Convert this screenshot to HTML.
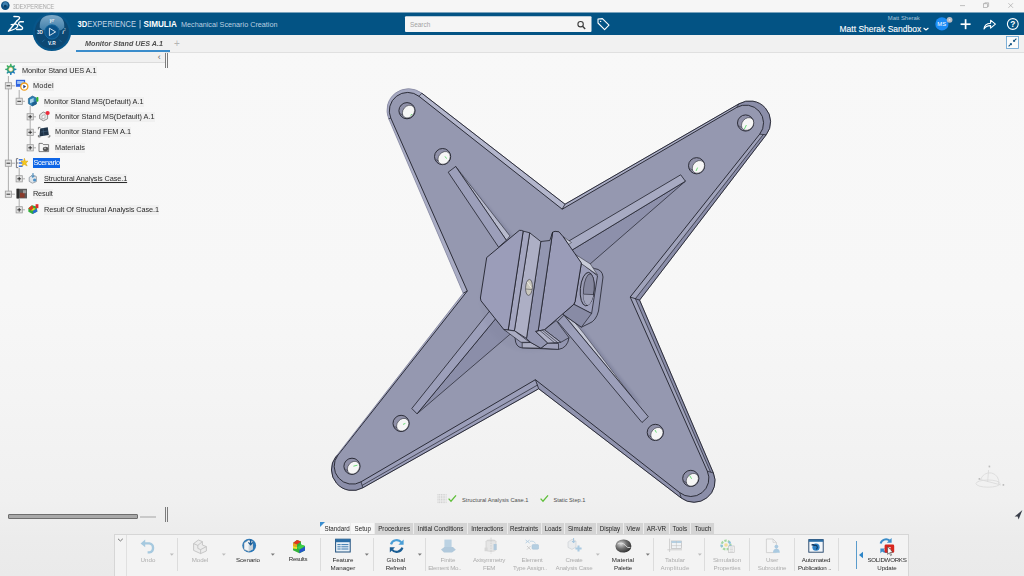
<!DOCTYPE html>
<html>
<head>
<meta charset="utf-8">
<title>3DEXPERIENCE</title>
<style>
html,body{margin:0;padding:0;}
body{width:1024px;height:576px;overflow:hidden;position:relative;font-family:"Liberation Sans",sans-serif;background:#f4f4f4;}
.abs{position:absolute;}
.tree,.tl,.tab,#tabtxt,#titlebar .t{will-change:transform;}
#viewport{position:absolute;left:0;top:36px;width:1024px;height:540px;background:linear-gradient(to bottom,#f8f8f8 0%,#f7f7f7 49%,#f4f4f4 67%,#f0f0f0 86%,#ececec 93%,#eaeaea 100%);}
#titlebar{position:absolute;left:0;top:0;width:1024px;height:12px;background:#f6f6f6;}
#titlebar .t{position:absolute;left:12.8px;top:2.9px;font-size:6.7px;color:#a4a4a4;transform:scaleX(0.795);transform-origin:0 0;}
#topbar{position:absolute;left:0;top:12px;width:1024px;height:24px;}
#tabbar{position:absolute;left:0;top:35px;width:1024px;height:17px;background:#f1f1f1;border-bottom:1px solid #e0e0e0;}
.tree{position:absolute;font-size:7.35px;color:#2b2b2b;white-space:nowrap;letter-spacing:0px;}
.tabs{position:absolute;top:522.6px;height:11.4px;font-size:6.7px;color:#1f1f1f;}
.tbt{display:inline-block;transform:scaleX(0.93);}
.tab{position:absolute;top:0;height:11.4px;line-height:12.6px;text-align:center;background:#d4d4d4;border-right:1px solid #ececec;box-sizing:border-box;}
.tab.on{background:#f7f7f7;}
.tl{position:absolute;font-size:6.2px;line-height:7.9px;text-align:center;white-space:nowrap;color:#2a2a2a;transform:translateX(-50%);}
.tl.dis{color:#adadad;}
</style>
</head>
<body>
<div id="viewport"></div>
<svg class="abs" style="left:0;top:0" width="1024" height="576" viewBox="0 0 1024 576">
<defs><filter id="bl" x="-20%" y="-20%" width="140%" height="140%"><feGaussianBlur stdDeviation="1.2"/></filter></defs>
<path d="M463.2 293.2 L388.7 118.8 A21.6 21.6 0 0 1 421.8 93.2 L565.0 204.2 L739.0 103.8 A21.0 21.0 0 0 1 766.2 134.8 L639.6 300.1 L713.4 473.0 A21.1 21.1 0 0 1 681.2 498.0 L538.7 388.8 L362.8 487.8 A21.0 21.0 0 0 1 335.9 456.6 L463.2 293.2 Z" fill="#8b8ea9"/>
<polygon points="421.8,93.2 565.0,204.2 562.2,209.2 419.0,96.3" fill="#b3b6cc" />
<polygon points="565.0,204.2 739.0,103.8 736.5,107.5 562.2,209.2" fill="#a9acc4" />
<path d="M388.7 118.8 A21.6 21.6 0 0 1 421.8 93.2 L419.0 96.3 A18.4 18.4 0 0 0 390.8 118.1 Z" fill="#a6a9c2"/>
<polygon points="535.4,379.7 361.1,481.8 362.8,487.8 538.7,388.8" fill="#9b9eb9" />
<polygon points="679.7,492.6 535.4,379.7 538.7,388.8 681.2,498.0" fill="#9093ae" />
<polygon points="463.2,293.2 388.7,118.8 390.8,118.1 467.3,291.0" fill="#a9acc4" />
<polygon points="335.9,456.6 463.2,293.2 467.3,291.0 337.9,455.2" fill="#a9acc4" />
<polygon points="759.7,134.2 763.3,134.5 635.4,298.7 710.6,472.2 707.3,471.1 630.2,297.0" fill="#a0a3bb" />
<path d="M467.3 291.0 L390.8 118.1 A18.4 18.4 0 0 1 419.0 96.3 L562.2 209.2 L736.5 107.5 A18.0 18.0 0 0 1 759.7 134.2 L630.2 297.0 L707.3 471.1 A18.0 18.0 0 0 1 679.7 492.6 L535.4 379.7 L361.1 481.8 A18.0 18.0 0 0 1 337.9 455.2 L467.3 291.0 Z" fill="#9598b0" stroke="#20212b" stroke-width="0.9" stroke-linejoin="round"/>
<path d="M463.2 293.2 L388.7 118.8 A21.6 21.6 0 0 1 421.8 93.2 L565.0 204.2 L739.0 103.8 A21.0 21.0 0 0 1 766.2 134.8 L639.6 300.1 L713.4 473.0 A21.1 21.1 0 0 1 681.2 498.0 L538.7 388.8 L362.8 487.8 A21.0 21.0 0 0 1 335.9 456.6 L463.2 293.2 Z" fill="none" stroke="#7d8099" stroke-width="0.6" stroke-linejoin="round"/>
<path d="M421.8 93.2 L565 204.2 L739.0 103.8 A21 21 0 0 1 766.2 134.8 L639.6 300.1 L713.4 473.0 A21.1 21.1 0 0 1 681.2 498.0 L538.7 388.75 L362.8 487.8 A21 21 0 0 1 335.9 456.6" fill="none" stroke="#20212b" stroke-width="0.9" stroke-linejoin="round"/>
<line x1="562.2" y1="209.2" x2="565" y2="204.2" stroke="#20212b" stroke-width="0.8"/>
<line x1="630.2" y1="297" x2="639.6" y2="300.1" stroke="#20212b" stroke-width="0.8"/>
<line x1="535.4" y1="379.7" x2="538.7" y2="388.75" stroke="#20212b" stroke-width="0.8"/>
<line x1="467.3" y1="291" x2="463.2" y2="293.2" stroke="#20212b" stroke-width="0.8"/>
<line x1="390.8" y1="118.1" x2="388.7" y2="118.8" stroke="#20212b" stroke-width="0.7"/>
<line x1="419.0" y1="96.3" x2="421.8" y2="93.2" stroke="#20212b" stroke-width="0.7"/>
<line x1="736.5" y1="107.5" x2="739.0" y2="103.8" stroke="#20212b" stroke-width="0.7"/>
<line x1="759.7" y1="134.2" x2="766.2" y2="134.8" stroke="#20212b" stroke-width="0.7"/>
<line x1="707.3" y1="471.1" x2="713.4" y2="473.0" stroke="#20212b" stroke-width="0.7"/>
<line x1="679.7" y1="492.6" x2="681.2" y2="498.0" stroke="#20212b" stroke-width="0.7"/>
<line x1="361.1" y1="481.8" x2="362.8" y2="487.8" stroke="#20212b" stroke-width="0.7"/>
<line x1="337.9" y1="455.2" x2="335.9" y2="456.6" stroke="#20212b" stroke-width="0.7"/>
<polyline points="763.3,134.5 635.4,298.7 710.6,472.2" fill="none" stroke="#20212b" stroke-width="0.7"/>
<polyline points="362.1,485.4 537.4,385.1" fill="none" stroke="#20212b" stroke-width="0.7"/>
<circle cx="407" cy="110.7" r="8.1" fill="#8f90a8" stroke="#20212b" stroke-width="0.9"/>
<ellipse cx="408.5" cy="111.6" rx="6.9" ry="5.5" fill="#f6f6f6" stroke="#20212b" stroke-width="0.5" transform="rotate(-50 408.5 111.6)"/>
<line x1="399.8" y1="113.3" x2="403" y2="115.3" stroke="#20212b" stroke-width="0.5"/>
<circle cx="745.6" cy="123" r="8.1" fill="#8f90a8" stroke="#20212b" stroke-width="0.9"/>
<ellipse cx="747.6" cy="124" rx="6.9" ry="5.5" fill="#f6f6f6" stroke="#20212b" stroke-width="0.5" transform="rotate(-50 747.6 124)"/>
<line x1="738.4" y1="125.6" x2="741.6" y2="127.6" stroke="#20212b" stroke-width="0.5"/>
<circle cx="352" cy="466.3" r="8.1" fill="#8f90a8" stroke="#20212b" stroke-width="0.9"/>
<ellipse cx="353.5" cy="467.7" rx="6.9" ry="5.5" fill="#f6f6f6" stroke="#20212b" stroke-width="0.5" transform="rotate(-50 353.5 467.7)"/>
<line x1="344.8" y1="468.90000000000003" x2="348" y2="470.90000000000003" stroke="#20212b" stroke-width="0.5"/>
<circle cx="690.8" cy="478.4" r="8.1" fill="#8f90a8" stroke="#20212b" stroke-width="0.9"/>
<ellipse cx="692.3" cy="479.8" rx="6.9" ry="5.5" fill="#f6f6f6" stroke="#20212b" stroke-width="0.5" transform="rotate(-50 692.3 479.8)"/>
<line x1="683.5999999999999" y1="481.0" x2="686.8" y2="483.0" stroke="#20212b" stroke-width="0.5"/>
<circle cx="442.6" cy="156.6" r="8.1" fill="#8f90a8" stroke="#20212b" stroke-width="0.9"/>
<ellipse cx="444.1" cy="157.9" rx="6.9" ry="5.5" fill="#f6f6f6" stroke="#20212b" stroke-width="0.5" transform="rotate(-50 444.1 157.9)"/>
<line x1="435.40000000000003" y1="159.2" x2="438.6" y2="161.2" stroke="#20212b" stroke-width="0.5"/>
<circle cx="696.6" cy="165.75" r="8.1" fill="#8f90a8" stroke="#20212b" stroke-width="0.9"/>
<ellipse cx="698.4" cy="166.9" rx="6.9" ry="5.5" fill="#f6f6f6" stroke="#20212b" stroke-width="0.5" transform="rotate(-50 698.4 166.9)"/>
<line x1="689.4" y1="168.35" x2="692.6" y2="170.35" stroke="#20212b" stroke-width="0.5"/>
<circle cx="401.1" cy="423.4" r="8.1" fill="#8f90a8" stroke="#20212b" stroke-width="0.9"/>
<ellipse cx="402.7" cy="424.75" rx="6.9" ry="5.5" fill="#f6f6f6" stroke="#20212b" stroke-width="0.5" transform="rotate(-50 402.7 424.75)"/>
<line x1="393.90000000000003" y1="426.0" x2="397.1" y2="428.0" stroke="#20212b" stroke-width="0.5"/>
<circle cx="655.3" cy="432.4" r="8.1" fill="#8f90a8" stroke="#20212b" stroke-width="0.9"/>
<ellipse cx="656.9" cy="433.8" rx="6.9" ry="5.5" fill="#f6f6f6" stroke="#20212b" stroke-width="0.5" transform="rotate(-50 656.9 433.8)"/>
<line x1="648.0999999999999" y1="435.0" x2="651.3" y2="437.0" stroke="#20212b" stroke-width="0.5"/>
<line x1="410.4" y1="115.4" x2="412" y2="114.2" stroke="#46d455" stroke-width="0.8"/>
<line x1="445" y1="156.4" x2="446.6" y2="158.6" stroke="#46d455" stroke-width="0.8"/>
<line x1="744.4" y1="129" x2="746.4" y2="125" stroke="#46d455" stroke-width="0.8"/>
<line x1="696" y1="171" x2="697.6" y2="167.6" stroke="#46d455" stroke-width="0.8"/>
<line x1="353.4" y1="466.2" x2="357.4" y2="465.2" stroke="#46d455" stroke-width="0.8"/>
<line x1="403" y1="424.4" x2="405.4" y2="423.4" stroke="#46d455" stroke-width="0.8"/>
<line x1="689.6" y1="475.4" x2="691.6" y2="478.8" stroke="#46d455" stroke-width="0.8"/>
<line x1="655" y1="430" x2="656.4" y2="432.6" stroke="#46d455" stroke-width="0.8"/>
<polygon points="455.7,166.5 509.9,235.9 506.4,240.3" fill="#b7bacd" />
<polygon points="455.7,166.5 512,234 520,246 500,244" fill="#6f7390" opacity="0.35" filter="url(#bl)"/>
<polygon points="455.7,166.5 509.9,235.9 506.4,240.3" fill="#b7bacd" stroke="#20212b" stroke-width="0.6" stroke-linejoin="round" />
<polygon points="448.2,172.2 455.7,166.5 506.4,240.3 498.6,247.2" fill="#9c9fba" stroke="#20212b" stroke-width="0.8" stroke-linejoin="round" />
<polygon points="685.4,181.2 561.8,256.3 576.5,275.8" fill="#8d90ab" stroke="#20212b" stroke-width="0.7" stroke-linejoin="round" />
<polygon points="680.7,174.8 685.4,181.2 561.8,256.3 556.5,248.3" fill="#a7aac2" stroke="#20212b" stroke-width="0.8" stroke-linejoin="round" />
<polygon points="417.0,413.8 500.5,312.8 517.6,327.8" fill="#8b8ea9" stroke="#20212b" stroke-width="0.7" stroke-linejoin="round" />
<polygon points="411.8,408.5 417.0,413.8 500.5,312.8 491.2,309.0" fill="#9c9fba" stroke="#20212b" stroke-width="0.8" stroke-linejoin="round" />
<polygon points="570,318 584,330 640,402 636,408 590,352" fill="#6f7390" opacity="0.4" filter="url(#bl)"/>
<polygon points="565.0,316.0 572.0,319.0 583.8,333.5 634.0,399.6" fill="#c6c9d7" stroke="#20212b" stroke-width="0.5" stroke-linejoin="round" />
<polygon points="642.0,422.5 648.3,416.7 564.0,315.2 557.7,321.5" fill="#9c9fba" stroke="#20212b" stroke-width="0.8" stroke-linejoin="round" />
<ellipse cx="530" cy="300" rx="50" ry="52" fill="#787b96" opacity="0.12" filter="url(#bl)"/>
<path d="M515.1 334 L515.1 338.4 Q515.5 347 521.8 347.8 L558.5 349.4 Q567.5 348 569 337.7 L560 332 L540 330 Z" fill="#9396b1" stroke="#20212b" stroke-width="0.8"/>
<polygon points="522.2,342.7 531.0,342.5 540.9,348.2 522.2,347.8" fill="#acaec3" stroke="#20212b" stroke-width="0.7" stroke-linejoin="round" />
<polygon points="547.6,343.1 558.5,343.5 558.5,349.4 540.9,348.2" fill="#9fa1ba" stroke="#20212b" stroke-width="0.7" stroke-linejoin="round" />
<polygon points="544.4,329.8 556.2,320.5 569.0,337.7 560.8,342.3" fill="#8e91ab" stroke="#20212b" stroke-width="0.7" stroke-linejoin="round" />
<path d="M581.4 263 L594.6 268.6 Q602.5 269.5 603 277 L598.5 311 Q596 321 589 323.5 L581.4 327.2 L562.6 314 Z" fill="#9497b1" stroke="#20212b" stroke-width="0.8" stroke-linejoin="round"/>
<polygon points="581.4,263.0 597.5,275.8 591.6,313.5 573.8,304.3 575.1,301.5" fill="#9ea0bb" stroke="#20212b" stroke-width="0.8" stroke-linejoin="round" />
<polygon points="573.8,304.3 591.6,313.5 581.4,327.2 562.6,314.0" fill="#888ba5" stroke="#20212b" stroke-width="0.7" stroke-linejoin="round" />
<ellipse cx="587.2" cy="289.1" rx="6.9" ry="16.8" fill="#9a9cb4" stroke="#20212b" stroke-width="0.9" transform="rotate(5 587.2 289.1)"/>
<clipPath id="hc"><rect x="570" y="294.4" width="40" height="30"/></clipPath>
<ellipse cx="588.8" cy="289.4" rx="5.3" ry="15.6" fill="#85879e" stroke="#20212b" stroke-width="0.6" transform="rotate(5 588.8 289.4)"/>
<ellipse cx="588.8" cy="289.4" rx="5.3" ry="15.6" fill="#a3a5bb" clip-path="url(#hc)" transform="rotate(5 588.8 289.4)"/>
<line x1="583.6" y1="294.2" x2="593.6" y2="294.6" stroke="#20212b" stroke-width="0.6"/>
<polygon points="563.0,236.5 571.5,242.5 568.5,244.5" fill="#c9ccd9" stroke="#20212b" stroke-width="0.5" stroke-linejoin="round" />
<polygon points="575.5,254.5 590.4,264.0 597.6,275.0 581.2,263.6" fill="#c9ccd9" stroke="#20212b" stroke-width="0.5" stroke-linejoin="round" />
<polygon points="552.6,232.2 555.0,231.3 559.0,231.8 563.0,236.5 581.4,263.0 575.1,301.5 573.8,304.3 544.4,329.8 535.5,331.4 538.2,330.6" fill="#9a9cb8" stroke="#20212b" stroke-width="0.9" stroke-linejoin="round" />
<polygon points="535.5,331.4 544.4,329.8 560.8,342.3 547.6,343.1" fill="#afb1c6" stroke="#20212b" stroke-width="0.7" stroke-linejoin="round" />
<line x1="540" y1="330.6" x2="554.5" y2="342.7" stroke="#20212b" stroke-width="0.6"/>
<line x1="542.3" y1="330.2" x2="557.6" y2="342.5" stroke="#20212b" stroke-width="0.6"/>
<polygon points="540.8,241.5 549.8,240.5 552.6,232.2 538.2,330.6 535.5,331.4 547.6,343.1 540.9,348.2 530.4,342.3 526.5,338.4" fill="#9396b1" stroke="#20212b" stroke-width="0.8" stroke-linejoin="round" />
<polygon points="529.7,232.8 540.8,241.5 526.5,338.4 514.4,330.7" fill="#adafc5" stroke="#20212b" stroke-width="0.8" stroke-linejoin="round" />
<polygon points="523.2,231.1 529.7,232.8 514.4,330.7 508.2,330.0" fill="#a3a5bf" stroke="#20212b" stroke-width="0.8" stroke-linejoin="round" />
<path d="M519.3 230.4 L486.7 257.5 L480.4 298 L481 300.8 L503.8 329.5 L508.2 330 L523.2 231.1 Q521.5 230 519.3 230.4 Z" fill="#9b9db9" stroke="#20212b" stroke-width="0.9" stroke-linejoin="round"/>
<polygon points="503.8,329.5 514.8,331.0 527.2,340.4 530.4,342.3 521.0,342.3" fill="#aaacc2" stroke="#20212b" stroke-width="0.7" stroke-linejoin="round" />
<ellipse cx="529" cy="287.4" rx="3.4" ry="8" fill="#c9c7bd" stroke="#4a4a50" stroke-width="0.7" transform="rotate(4 529 287.4)"/>
<line x1="526" y1="289" x2="532" y2="289.6" stroke="#55555a" stroke-width="0.6"/>
<line x1="527.3" y1="282" x2="531.2" y2="287.5" stroke="#f2f0e6" stroke-width="0.9"/>
</svg>
<div id="titlebar">
<svg class="abs" style="left:0;top:0" width="14" height="12" viewBox="0 0 14 12"><circle cx="5.3" cy="5.6" r="4.3" fill="#0d4f80"/><circle cx="5.3" cy="4.6" r="2.6" fill="#3d7fae"/><circle cx="5.3" cy="6.2" r="1.4" fill="#0a3c63"/></svg>
<span class="t">3DEXPERIENCE</span>
<svg class="abs" style="left:950px;top:0" width="74" height="12" viewBox="950 0 74 12"><g stroke="#9a9a9a" stroke-width="0.6" fill="none"><line x1="960" y1="5.6" x2="965" y2="5.6"/><rect x="983.6" y="3.8" width="3.8" height="3.6"/><path d="M984.8 3.8V2.8H988.6V6.4H987.4"/><line x1="1008.4" y1="3.2" x2="1013" y2="7.8"/><line x1="1013" y1="3.2" x2="1008.4" y2="7.8"/></g></svg>
</div>
<div id="topbar">
<svg class="abs" style="left:0;top:0" width="1024" height="24" viewBox="0 12 1024 24">
<rect x="0" y="12.5" width="1024" height="22.5" fill="#035384"/>
<!-- DS logo -->
<g fill="none" stroke="#fff" stroke-width="1.35" stroke-linecap="round" stroke-linejoin="round">
<path d="M13.9 16.5 L18.4 16.6 Q20.2 17 19.3 18.8 L16.8 21"/>
<path d="M16.8 21 L8.4 31.2 Q17 29 17.6 26.4 Q17.8 24 15.6 24.1 L11.2 24.6"/>
<path d="M23.4 21.7 L20.4 21.7 Q18 22.4 18.9 24.6 L22.4 27.2 Q23.2 29.2 20.8 29.5 L16.6 29.5"/>
</g>
<!-- search -->
<rect x="405" y="16.3" width="186.5" height="15.8" rx="1" fill="#f5f5f5"/>
<text x="410" y="26.6" font-size="6.4" fill="#a3a3a3" font-family="Liberation Sans">Search</text>
<g stroke="#3c3c3c" fill="none" stroke-width="1.1"><circle cx="580.6" cy="24.2" r="2.7"/><line x1="582.6" y1="26.3" x2="585.2" y2="28.9" stroke-width="1.4"/></g>
<!-- tag -->
<g stroke="#fff" fill="none" stroke-width="1.1" stroke-linejoin="round"><path d="M598 19 L602.4 18.6 L609 25.2 L604.6 29.6 L598 23 Z"/><circle cx="600.6" cy="21.4" r="0.7" fill="#fff" stroke="none"/></g>
<!-- brand text -->
<text x="77.5" y="27" font-size="8.3" fill="#fff" font-family="Liberation Sans" textLength="58.5" lengthAdjust="spacingAndGlyphs"><tspan font-weight="bold">3D</tspan><tspan fill="#c3d6e6">EXPERIENCE</tspan></text>
<rect x="139.6" y="20" width="0.9" height="8.5" fill="#c3d6e6"/>
<text x="143.5" y="27" font-size="8.3" fill="#fff" font-weight="bold" font-family="Liberation Sans" textLength="33.5" lengthAdjust="spacingAndGlyphs">SIMULIA</text>
<text x="181" y="27" font-size="7.4" fill="#bcd0e1" font-family="Liberation Sans" textLength="96.5" lengthAdjust="spacingAndGlyphs">Mechanical Scenario Creation</text>
<!-- user -->
<text x="887.7" y="20.4" font-size="5.4" fill="#a9c3d9" font-family="Liberation Sans" textLength="32" lengthAdjust="spacingAndGlyphs">Matt Sherak</text>
<text x="839.5" y="31.8" font-size="8.6" fill="#fff" font-family="Liberation Sans" textLength="81.7" lengthAdjust="spacingAndGlyphs" stroke="#fff" stroke-width="0.1">Matt Sherak Sandbox</text>
<path d="M923.6 28 L926 30 L928.4 28" stroke="#fff" stroke-width="1.1" fill="none"/>
<circle cx="941.9" cy="23.9" r="6.6" fill="#1b8cf5"/>
<text x="941.7" y="26.2" font-size="5.8" fill="#fff" text-anchor="middle" font-family="Liberation Sans">MS</text>
<circle cx="949.6" cy="19.8" r="2.9" fill="#b9bcc2"/><circle cx="949.6" cy="19.8" r="0.9" fill="#e8e8e8"/>
<g stroke="#fff" stroke-width="1.7" stroke-linecap="butt"><line x1="960.6" y1="24.2" x2="970.6" y2="24.2"/><line x1="965.6" y1="19.2" x2="965.6" y2="29.2"/></g>
<path d="M984 29 Q984.4 23.6 990.6 23.2 L990.6 20.2 L995.4 24.2 L990.6 28.2 L990.6 25.6 Q986.2 25.4 984 29 Z" fill="none" stroke="#fff" stroke-width="1.1" stroke-linejoin="round"/>
<circle cx="1012.8" cy="24" r="5.4" fill="none" stroke="#fff" stroke-width="1.1"/>
<text x="1012.8" y="27" font-size="8.4" fill="#fff" text-anchor="middle" font-weight="bold" font-family="Liberation Sans">?</text>
</svg>
</div>
<div id="tabbar">
<div class="abs" style="left:85px;top:3.6px;font-size:7.2px;font-weight:bold;font-style:italic;color:#505050;white-space:nowrap;letter-spacing:0px" id="tabtxt">Monitor Stand UES A.1</div>
<div class="abs" style="left:76px;top:14.5px;width:94px;height:2px;background:#3a8ccb"></div>
<div class="abs" style="left:174px;top:2.6px;font-size:10px;color:#b4b4b4">+</div>
<svg class="abs" style="left:1006px;top:1px" width="13" height="13" viewBox="0 0 13 13"><rect x="0.5" y="0.5" width="12" height="12" fill="#fbfbfb" stroke="#5f9fd0" stroke-width="0.8"/><g stroke="#0a4f80" stroke-width="1.1" fill="#0a4f80"><line x1="10.4" y1="2.6" x2="7.6" y2="5.4"/><path d="M7.2 3.6V5.8H9.4Z" stroke="none"/><line x1="2.6" y1="10.4" x2="5.4" y2="7.6"/><path d="M5.8 9.4V7.2H3.6Z" stroke="none"/></g></svg>
</div>
<!-- tree header strip -->
<div class="abs" style="left:0;top:52px;width:165px;height:9.5px;background:#f0f0f0;border-bottom:1px solid #dcdcdc"></div>
<div class="abs" style="left:157.8px;top:51.6px;font-size:9px;color:#666;line-height:10px">‹</div>
<div class="abs" style="left:165px;top:52.5px;width:0.7px;height:15px;background:#7c7c7c"></div>
<div class="abs" style="left:167.2px;top:52.5px;width:0.7px;height:15px;background:#7c7c7c"></div>
<!-- compass -->
<svg class="abs" style="left:30px;top:10px" width="44" height="44" viewBox="30 10 44 44">
<defs><linearGradient id="cg" x1="0" y1="0" x2="0" y2="1"><stop offset="0" stop-color="#7fabc9"/><stop offset="1" stop-color="#3f7eaa"/></linearGradient></defs>
<circle cx="51.9" cy="31.9" r="19.2" fill="#07568a"/>
<circle cx="51.9" cy="31.9" r="17" fill="#0c4873"/>
<path d="M39.7 27.4 Q39 15 52 15 Q65 15 64.3 27.4 Q62 30.2 59.5 30.4 A7.8 7.8 0 0 0 44.5 30.4 Q42 30.2 39.7 27.4 Z" fill="url(#cg)"/>
<circle cx="51.9" cy="31.9" r="7.2" fill="#0b5389" stroke="#1b71aa" stroke-width="0.8"/>
<path d="M49.4 28.2 L55.6 31.9 L49.4 35.6 Z" fill="none" stroke="#e9f1f7" stroke-width="0.9" stroke-linejoin="round"/>
<g stroke="#2a7ab0" stroke-width="0.6"><line x1="44.6" y1="39.6" x2="42.2" y2="42"/><line x1="59.2" y1="39.6" x2="61.6" y2="42"/></g>
<text x="51.9" y="21.6" font-size="5" fill="#e6eef5" text-anchor="middle" font-weight="bold" font-style="italic" font-family="Liberation Sans">γr</text>
<text x="39.9" y="33.8" font-size="4.6" fill="#e6eef5" text-anchor="middle" font-weight="bold" font-family="Liberation Sans">3D</text>
<text x="63" y="34" font-size="5.4" fill="#e6eef5" text-anchor="middle" font-weight="bold" font-style="italic" font-family="Liberation Sans">i</text><text x="64.8" y="31" font-size="2.8" fill="#e6eef5" text-anchor="middle" font-family="Liberation Sans">2</text>
<text x="51.9" y="45.4" font-size="4.8" fill="#e6eef5" text-anchor="middle" font-weight="bold" font-family="Liberation Sans">V.R</text>
</svg>

<svg class="abs" style="left:1.1px;top:60px" width="70" height="160" viewBox="0 60 70 160">
<g stroke="#9c9c9c" stroke-width="0.8" fill="none">
<line x1="7.4" y1="76" x2="7.4" y2="194"/>
<line x1="18.2" y1="90" x2="18.2" y2="101.3"/><line x1="18.2" y1="101.3" x2="24" y2="101.3"/>
<line x1="29.2" y1="106" x2="29.2" y2="147.8"/>
<line x1="18.2" y1="168" x2="18.2" y2="178.8"/><line x1="18.2" y1="178.8" x2="24" y2="178.8"/>
<line x1="18.2" y1="199" x2="18.2" y2="209.8"/><line x1="18.2" y1="209.8" x2="24" y2="209.8"/>
<line x1="7.4" y1="85.8" x2="14" y2="85.8"/>
<line x1="7.4" y1="163.2" x2="14" y2="163.2"/>
<line x1="7.4" y1="194.2" x2="14" y2="194.2"/>
<line x1="29.2" y1="116.8" x2="35" y2="116.8"/>
<line x1="29.2" y1="132.3" x2="35" y2="132.3"/>
<line x1="29.2" y1="147.8" x2="35" y2="147.8"/>
</g>
<rect x="4.300000000000001" y="82.7" width="6.2" height="6.2" fill="#e4e4e4" stroke="#9a9a9a" stroke-width="0.8"/><line x1="5.5" y1="85.8" x2="9.3" y2="85.8" stroke="#222" stroke-width="0.9"/>
<rect x="15.1" y="98.2" width="6.2" height="6.2" fill="#e4e4e4" stroke="#9a9a9a" stroke-width="0.8"/><line x1="16.3" y1="101.3" x2="20.099999999999998" y2="101.3" stroke="#222" stroke-width="0.9"/>
<rect x="26.099999999999998" y="113.7" width="6.2" height="6.2" fill="#e4e4e4" stroke="#9a9a9a" stroke-width="0.8"/><line x1="27.3" y1="116.8" x2="31.099999999999998" y2="116.8" stroke="#222" stroke-width="0.9"/><line x1="29.2" y1="114.89999999999999" x2="29.2" y2="118.7" stroke="#222" stroke-width="0.9"/>
<rect x="26.099999999999998" y="129.20000000000002" width="6.2" height="6.2" fill="#e4e4e4" stroke="#9a9a9a" stroke-width="0.8"/><line x1="27.3" y1="132.3" x2="31.099999999999998" y2="132.3" stroke="#222" stroke-width="0.9"/><line x1="29.2" y1="130.4" x2="29.2" y2="134.20000000000002" stroke="#222" stroke-width="0.9"/>
<rect x="26.099999999999998" y="144.70000000000002" width="6.2" height="6.2" fill="#e4e4e4" stroke="#9a9a9a" stroke-width="0.8"/><line x1="27.3" y1="147.8" x2="31.099999999999998" y2="147.8" stroke="#222" stroke-width="0.9"/><line x1="29.2" y1="145.9" x2="29.2" y2="149.70000000000002" stroke="#222" stroke-width="0.9"/>
<rect x="4.300000000000001" y="160.1" width="6.2" height="6.2" fill="#e4e4e4" stroke="#9a9a9a" stroke-width="0.8"/><line x1="5.5" y1="163.2" x2="9.3" y2="163.2" stroke="#222" stroke-width="0.9"/>
<rect x="15.1" y="175.70000000000002" width="6.2" height="6.2" fill="#e4e4e4" stroke="#9a9a9a" stroke-width="0.8"/><line x1="16.3" y1="178.8" x2="20.099999999999998" y2="178.8" stroke="#222" stroke-width="0.9"/><line x1="18.2" y1="176.9" x2="18.2" y2="180.70000000000002" stroke="#222" stroke-width="0.9"/>
<rect x="4.300000000000001" y="191.1" width="6.2" height="6.2" fill="#e4e4e4" stroke="#9a9a9a" stroke-width="0.8"/><line x1="5.5" y1="194.2" x2="9.3" y2="194.2" stroke="#222" stroke-width="0.9"/>
<rect x="15.1" y="206.70000000000002" width="6.2" height="6.2" fill="#e4e4e4" stroke="#9a9a9a" stroke-width="0.8"/><line x1="16.3" y1="209.8" x2="20.099999999999998" y2="209.8" stroke="#222" stroke-width="0.9"/><line x1="18.2" y1="207.9" x2="18.2" y2="211.70000000000002" stroke="#222" stroke-width="0.9"/>
<defs><linearGradient id="gg" x1="0" y1="0" x2="0.6" y2="1"><stop offset="0" stop-color="#5cc23a"/><stop offset="0.55" stop-color="#2a9e86"/><stop offset="1" stop-color="#1f72c8"/></linearGradient></defs><g transform="translate(9.8,69.4)"><polygon points="-0.61,-5.57 0.61,-5.57 0.90,-3.79 2.05,-3.32 3.50,-4.37 4.37,-3.50 3.32,-2.05 3.79,-0.90 5.57,-0.61 5.57,0.61 3.79,0.90 3.32,2.05 4.37,3.50 3.50,4.37 2.05,3.32 0.90,3.79 0.61,5.57 -0.61,5.57 -0.90,3.79 -2.05,3.32 -3.50,4.37 -4.37,3.50 -3.32,2.05 -3.79,0.90 -5.57,0.61 -5.57,-0.61 -3.79,-0.90 -3.32,-2.05 -4.37,-3.50 -3.50,-4.37 -2.05,-3.32 -0.90,-3.79" fill="url(#gg)"/><circle r="2.1" fill="#f8f8f8" stroke="#e8c020" stroke-width="0.5"/></g>
<g transform="translate(21.5,85)"><rect x="-6.6" y="-5.2" width="9.2" height="7" fill="#2f63e0"/><rect x="-5.4" y="-4" width="6.8" height="3" fill="#9cc1f5"/><circle cx="1.8" cy="1.6" r="3.6" fill="#fff" stroke="#f0a020" stroke-width="1.3"/><path d="M0.8 -0.2 L3.6 1.6 L0.8 3.4 Z" fill="#223a7a"/></g>
<g transform="translate(32,101)"><path d="M-4.6 -2.4 L-0.6 -5 L3.4 -3 L3.4 3 L-0.8 5 L-4.6 2.6 Z" fill="#2c7fb4" stroke="#1a567f" stroke-width="0.6"/><path d="M-3 -1.6 L0.6 -3 L0.6 1 L-3 2.2 Z" fill="#a8d4ec"/><path d="M-0.8 5 L3.4 3 V0 L-0.8 1.8Z" fill="#1d5e8e"/><rect x="3.4" y="-4" width="2" height="4.8" rx="0.8" fill="#2fb42f"/></g>
<g transform="translate(43,116.2)"><path d="M-4.4 -1.4 L-0.8 -4.2 L3.6 -2.4 L3.6 2.6 L-0.6 4.6 L-4.4 2.4 Z" fill="#e6e6e6" stroke="#6a6a6a" stroke-width="0.7"/><path d="M-2 -0.4 L1 -1.6 L1 1.8 L-2 2.6 Z" fill="#fafafa" stroke="#8a8a8a" stroke-width="0.5"/><circle cx="3.6" cy="-3.2" r="2.1" fill="#ee2a3a"/></g>
<g transform="translate(43,132)"><path d="M-3.8 -3.6 L3.8 -4.8 L4.8 3 L-4.6 4.6 Z" fill="#1f3347"/><path d="M-5.6 -4.6 V-2.6 M-5.6 -4.6 H-3.6 M5.8 5 V3 M5.8 5 H3.8 M-5.6 5 V3 M-5.6 5 H-3.6" stroke="#4a4a4a" stroke-width="0.7" fill="none"/><path d="M-3 0 L4 -1 M-1 -4 L0 4" stroke="#4e6f8d" stroke-width="0.5"/></g>
<g transform="translate(43,147.4)"><path d="M-5 -4 H-1.6 L-0.6 -2.8 H4.6 V4.2 H-5 Z" fill="#f8f8f8" stroke="#4a4a4a" stroke-width="0.7"/><ellipse cx="1.6" cy="1.6" rx="2.8" ry="2.2" fill="#555"/><ellipse cx="1" cy="1" rx="1.2" ry="0.8" fill="#aaa"/></g>
<g transform="translate(20.6,163)"><path d="M-5.2 -4.4 V4.6 H-3.4 M-5.2 -4.4 H-3.4 M-5.2 0 H-3.4" stroke="#6a6a72" stroke-width="0.9" fill="none"/><path d="M-2.8 -3.2 H1 M-2.8 0 H1 M-2.8 3.2 H1" stroke="#3a74e0" stroke-width="1.5"/><path d="M2.8 -4.8 L3.8 -1.8 L6.4 -2 L4.4 0.2 L5.6 3 L2.8 1.6 L0.2 3 L1.2 0.2 L-0.6 -2 L2 -1.8 Z" fill="#f6c81e" stroke="#c79200" stroke-width="0.4"/></g>
<g transform="translate(32,178.4)"><path d="M-3.8 -1 L-0.4 -3.4 L3.4 -1.8 L3.4 3.2 L-0.6 4.8 L-3.8 3 Z" fill="#dfe5ea" stroke="#6b7680" stroke-width="0.6"/><path d="M0 -5.4 V-1.2 M-1.6 -2.6 L0 -1 L1.6 -2.6" stroke="#2a7ab8" stroke-width="0.9" fill="none"/><circle cx="1.6" cy="1.6" r="1.6" fill="#4a90c8"/></g>
<g transform="translate(21,193.8)"><rect x="-5.4" y="-5" width="10.4" height="9.6" fill="#5a5a5a"/><rect x="-5.4" y="-5" width="2.6" height="9.6" fill="#2b2b2b"/><rect x="-2" y="-1" width="4.6" height="4.8" fill="#8a3a2a"/><rect x="1" y="-3.6" width="3.2" height="3" fill="#9a9a9a"/></g>
<g transform="translate(32,209.2)"><path d="M-4.6 -1 L-1 -4 L3.6 -2.6 L4.4 2.4 L-0.4 4.8 L-4.6 2.6 Z" fill="#2fae3a"/><path d="M-4.6 -1 L-1 -4 L0.6 -1.2 L-2 1.4 Z" fill="#e03a1e"/><path d="M-0.4 4.8 L4.4 2.4 L3.6 -0.4 L0.2 1.4 Z" fill="#2a6ad0"/><path d="M-2 1.4 L0.6 -1.2 L2.6 -0.4 L0.2 1.4 Z" fill="#f2d21e"/><rect x="2.6" y="-5" width="2.8" height="4" fill="#e02a2a"/></g>
</svg>
<div class="tree" style="left:22px;top:65.6px;height:10.4px;line-height:10.4px;letter-spacing:-0.043px;background:#f0f0f0;"><span class="tw">Monitor Stand UES A.1</span></div>
<div class="tree" style="left:33px;top:81.0px;height:10.4px;line-height:10.4px;letter-spacing:0.150px;background:#f0f0f0;"><span class="tw">Model</span></div>
<div class="tree" style="left:43.5px;top:96.5px;height:10.4px;line-height:10.4px;letter-spacing:0.000px;background:#f0f0f0;"><span class="tw">Monitor Stand MS(Default) A.1</span></div>
<div class="tree" style="left:54.5px;top:111.6px;height:10.4px;line-height:10.4px;letter-spacing:0.000px;background:#f0f0f0;"><span class="tw">Monitor Stand MS(Default) A.1</span></div>
<div class="tree" style="left:54.5px;top:127.10000000000001px;height:10.4px;line-height:10.4px;letter-spacing:0.010px;background:#f0f0f0;"><span class="tw">Monitor Stand FEM A.1</span></div>
<div class="tree" style="left:54.5px;top:142.60000000000002px;height:10.4px;line-height:10.4px;letter-spacing:0.011px;background:#f0f0f0;"><span class="tw">Materials</span></div>
<div class="tree" style="left:33px;top:158.0px;height:10.4px;line-height:10.4px;letter-spacing:-0.325px;background:#0f66e6;color:#fff;padding:0 0.4px;margin-top:0.4px;"><span class="tw">Scenario</span></div>
<div class="tree" style="left:43.5px;top:173.60000000000002px;height:10.4px;line-height:10.4px;letter-spacing:-0.100px;background:#f0f0f0;text-decoration:underline;"><span class="tw">Structural Analysis Case.1</span></div>
<div class="tree" style="left:33px;top:189.0px;height:10.4px;line-height:10.4px;letter-spacing:-0.217px;background:#f0f0f0;"><span class="tw">Result</span></div>
<div class="tree" style="left:43.5px;top:204.60000000000002px;height:10.4px;line-height:10.4px;letter-spacing:-0.097px;background:#f0f0f0;"><span class="tw">Result Of Structural Analysis Case.1</span></div>
<div class="abs" style="left:8px;top:514px;width:130px;height:5.2px;background:#a9a9a9;border:0.8px solid #6e6e6e;border-radius:1px;box-sizing:border-box"></div>
<div class="abs" style="left:140px;top:515.6px;width:16px;height:2.2px;background:#c9c9c9"></div>
<div class="abs" style="left:165px;top:507px;width:0.7px;height:15px;background:#7c7c7c"></div>
<div class="abs" style="left:167.2px;top:507px;width:0.7px;height:15px;background:#7c7c7c"></div>
<svg class="abs" style="left:436px;top:492px" width="160" height="12" viewBox="436 492 160 12">
<g stroke="#b4b4b4" stroke-width="0.6" stroke-dasharray="1 0.7"><line x1="437.5" y1="494.6" x2="446.5" y2="494.6"/><line x1="437.5" y1="496.2" x2="446.5" y2="496.2"/><line x1="437.5" y1="497.8" x2="446.5" y2="497.8"/><line x1="437.5" y1="499.4" x2="446.5" y2="499.4"/><line x1="437.5" y1="501" x2="446.5" y2="501"/><line x1="437.5" y1="502.6" x2="446.5" y2="502.6"/></g>
<path d="M448.6 498.6 L451 501.2 L456 495.4" stroke="#5fbf3a" stroke-width="1.3" fill="none"/>
<path d="M540.6 498.6 L543 501.2 L548 495.4" stroke="#5fbf3a" stroke-width="1.3" fill="none"/>
<text x="462" y="501.6" font-size="6.2" fill="#4e4e4e" font-family="Liberation Sans" textLength="66.5" lengthAdjust="spacingAndGlyphs">Structural Analysis Case.1</text>
<text x="553.4" y="501.6" font-size="6.2" fill="#4e4e4e" font-family="Liberation Sans" textLength="32" lengthAdjust="spacingAndGlyphs">Static Step.1</text>
</svg>
<div class="tabs abs" style="left:0;width:1024px">
<div class="tab on" style="left:320.4px;width:31.0px;text-indent:1.6px"><span class="tbt">Standard</span></div>
<div class="tab on" style="left:351.4px;width:23.6px"><span class="tbt">Setup</span></div>
<div class="tab" style="left:375px;width:38.6px"><span class="tbt">Procedures</span></div>
<div class="tab" style="left:413.6px;width:54.4px"><span class="tbt">Initial Conditions</span></div>
<div class="tab" style="left:468px;width:40.2px"><span class="tbt">Interactions</span></div>
<div class="tab" style="left:508.2px;width:33.8px"><span class="tbt">Restraints</span></div>
<div class="tab" style="left:542px;width:23.2px"><span class="tbt">Loads</span></div>
<div class="tab" style="left:565.2px;width:32.0px"><span class="tbt">Simulate</span></div>
<div class="tab" style="left:597.2px;width:27.0px"><span class="tbt">Display</span></div>
<div class="tab" style="left:624.2px;width:20.2px"><span class="tbt">View</span></div>
<div class="tab" style="left:644.4px;width:25.6px"><span class="tbt">AR-VR</span></div>
<div class="tab" style="left:670px;width:21.2px"><span class="tbt">Tools</span></div>
<div class="tab" style="left:691.2px;width:24.4px"><span class="tbt">Touch</span></div>
</div>
<svg class="abs" style="left:320px;top:522px" width="6" height="6"><path d="M0 0H5L0 5Z" fill="#3b8ed0"/></svg>
<div class="abs" style="left:114px;top:534px;width:795px;height:42px;background:#f3f3f3;border:1px solid #d6d6d6;border-bottom:none;box-sizing:border-box"></div>
<div class="abs" style="left:126px;top:535px;width:1px;height:41px;background:#e0e0e0"></div>
<svg class="abs" style="left:116px;top:537px" width="9" height="6" viewBox="0 0 9 6"><path d="M2 1.8L4.4 4L6.8 1.8" stroke="#666" stroke-width="0.9" fill="none"/></svg>
<div class="abs" style="left:177px;top:538px;width:1px;height:33px;background:#dcdcdc"></div>
<div class="abs" style="left:320px;top:538px;width:1px;height:33px;background:#dcdcdc"></div>
<div class="abs" style="left:373px;top:538px;width:1px;height:33px;background:#dcdcdc"></div>
<div class="abs" style="left:425px;top:538px;width:1px;height:33px;background:#dcdcdc"></div>
<div class="abs" style="left:653px;top:538px;width:1px;height:33px;background:#dcdcdc"></div>
<div class="abs" style="left:704px;top:538px;width:1px;height:33px;background:#dcdcdc"></div>
<div class="abs" style="left:749px;top:538px;width:1px;height:33px;background:#dcdcdc"></div>
<div class="abs" style="left:794px;top:538px;width:1px;height:33px;background:#dcdcdc"></div>
<div class="abs" style="left:838px;top:538px;width:1px;height:33px;background:#dcdcdc"></div>
<div class="abs" style="left:855.6px;top:541px;width:1.2px;height:28px;background:#5a9ccc"></div>
<svg class="abs" style="left:858px;top:551px" width="6" height="8" viewBox="0 0 6 8"><path d="M5 0.8V7.2L1 4Z" fill="#2e86c8"/></svg>
<svg class="abs" style="left:168.8px;top:553.4px" width="6" height="4" viewBox="0 0 6 4"><path d="M0.8 0.4H4.8L2.8 2.8Z" fill="#bdbdbd"/></svg>
<svg class="abs" style="left:220.8px;top:553.4px" width="6" height="4" viewBox="0 0 6 4"><path d="M0.8 0.4H4.8L2.8 2.8Z" fill="#bdbdbd"/></svg>
<svg class="abs" style="left:269.8px;top:553.4px" width="6" height="4" viewBox="0 0 6 4"><path d="M0.8 0.4H4.8L2.8 2.8Z" fill="#7a7a7a"/></svg>
<svg class="abs" style="left:363.8px;top:553.4px" width="6" height="4" viewBox="0 0 6 4"><path d="M0.8 0.4H4.8L2.8 2.8Z" fill="#7a7a7a"/></svg>
<svg class="abs" style="left:416.8px;top:553.4px" width="6" height="4" viewBox="0 0 6 4"><path d="M0.8 0.4H4.8L2.8 2.8Z" fill="#7a7a7a"/></svg>
<svg class="abs" style="left:594.8px;top:553.4px" width="6" height="4" viewBox="0 0 6 4"><path d="M0.8 0.4H4.8L2.8 2.8Z" fill="#bdbdbd"/></svg>
<svg class="abs" style="left:644.8px;top:553.4px" width="6" height="4" viewBox="0 0 6 4"><path d="M0.8 0.4H4.8L2.8 2.8Z" fill="#7a7a7a"/></svg>
<svg class="abs" style="left:696.8px;top:553.4px" width="6" height="4" viewBox="0 0 6 4"><path d="M0.8 0.4H4.8L2.8 2.8Z" fill="#bdbdbd"/></svg>
<div class="tl dis" style="left:148px;top:555.8px"><span class="ln" style="display:block;letter-spacing:0.051px;position:relative;left:0px">Undo</span></div>
<div class="tl dis" style="left:200px;top:555.8px"><span class="ln" style="display:block;letter-spacing:-0.072px;position:relative;left:0px">Model</span></div>
<div class="tl" style="left:248px;top:555.8px"><span class="ln" style="display:block;letter-spacing:-0.053px;position:relative;left:0px">Scenario</span></div>
<div class="tl" style="left:298px;top:555.4px"><span class="ln" style="display:block;letter-spacing:-0.300px;position:relative;left:0px">Results</span></div>
<div class="tl" style="left:343px;top:556.0px"><span class="ln" style="display:block;letter-spacing:-0.047px;position:relative;left:0px">Feature</span><span class="ln" style="display:block;letter-spacing:0.083px;position:relative;left:0px">Manager</span></div>
<div class="tl" style="left:396px;top:556.0px"><span class="ln" style="display:block;letter-spacing:0.185px;position:relative;left:0px">Global</span><span class="ln" style="display:block;letter-spacing:-0.167px;position:relative;left:0px">Refresh</span></div>
<div class="tl dis" style="left:448px;top:556.0px"><span class="ln" style="display:block;letter-spacing:-0.023px;position:relative;left:0px">Finite</span><span class="ln" style="display:block;letter-spacing:-0.300px;position:relative;left:-3.4px">Element Mo..</span></div>
<div class="tl dis" style="left:488.6px;top:556.0px"><span class="ln" style="display:block;letter-spacing:-0.300px;position:relative;left:0px">Axisymmetry</span><span class="ln" style="display:block;letter-spacing:-0.300px;position:relative;left:0px">FEM</span></div>
<div class="tl dis" style="left:532px;top:556.0px"><span class="ln" style="display:block;letter-spacing:-0.243px;position:relative;left:0px">Element</span><span class="ln" style="display:block;letter-spacing:-0.200px;position:relative;left:-2px">Type Assign..</span></div>
<div class="tl dis" style="left:574px;top:556.0px"><span class="ln" style="display:block;letter-spacing:-0.263px;position:relative;left:0px">Create</span><span class="ln" style="display:block;letter-spacing:-0.171px;position:relative;left:0px">Analysis Case</span></div>
<div class="tl" style="left:623px;top:556.0px"><span class="ln" style="display:block;letter-spacing:0.061px;position:relative;left:0px">Material</span><span class="ln" style="display:block;letter-spacing:-0.181px;position:relative;left:0px">Palette</span></div>
<div class="tl dis" style="left:675px;top:556.0px"><span class="ln" style="display:block;letter-spacing:-0.042px;position:relative;left:0px">Tabular</span><span class="ln" style="display:block;letter-spacing:0.165px;position:relative;left:0px">Amplitude</span></div>
<div class="tl dis" style="left:727px;top:556.0px"><span class="ln" style="display:block;letter-spacing:-0.089px;position:relative;left:0px">Simulation</span><span class="ln" style="display:block;letter-spacing:-0.120px;position:relative;left:0px">Properties</span></div>
<div class="tl dis" style="left:772px;top:556.0px"><span class="ln" style="display:block;letter-spacing:-0.300px;position:relative;left:0px">User</span><span class="ln" style="display:block;letter-spacing:-0.144px;position:relative;left:0px">Subroutine</span></div>
<div class="tl" style="left:815.6px;top:556.0px"><span class="ln" style="display:block;letter-spacing:-0.160px;position:relative;left:0px">Automated</span><span class="ln" style="display:block;letter-spacing:-0.150px;position:relative;left:-1.4px">Publication ..</span></div>
<div class="tl" style="left:887px;top:556.0px"><span class="ln" style="display:block;letter-spacing:-0.300px;position:relative;left:0px">SOLIDWORKS</span><span class="ln" style="display:block;letter-spacing:-0.076px;position:relative;left:0px">Update</span></div>
<svg class="abs" style="left:114px;top:536px" width="796" height="22" viewBox="114 536 796 22">
<!-- Undo -->
<g opacity="0.75"><path d="M143.6 543.4 H149.4 A4.6 4.6 0 0 1 149.4 552.4 H147.6" fill="none" stroke="#8dbbd8" stroke-width="2.4"/><path d="M140.6 543.4 L145.2 539.6 V547.2 Z" fill="#8dbbd8"/></g>
<!-- Model -->
<g stroke="#bdbdbd" stroke-width="0.8" fill="#ececec" stroke-linejoin="round"><path d="M193.6 543.6 L198.4 540 L202.4 541.6 L202.4 545 L206.4 546.6 V551 L200.6 553.6 L193.6 550.4 Z"/><path d="M193.6 543.6 L197.8 545.4 V548.4 L200.6 549.6 L206.4 546.6 M200.6 549.6 V553.6 M197.8 545.4 L202.4 541.6" fill="none"/></g>
<!-- Scenario -->
<g><circle cx="249.2" cy="545.6" r="6.9" fill="#2b78b8"/><path d="M244 543 L248.6 540 L252.8 541.4 V549.2 L248.6 551.4 L244 549.4 Z" fill="#f2f4f6" stroke="#7a8a98" stroke-width="0.5"/><path d="M248.6 544.8 L252.8 543.2 V549.2 L248.6 551.4 Z" fill="#c9d2da"/><path d="M250.6 539.6 V544.2 M248.4 542.4 L250.6 544.8 L252.8 542.4" stroke="#175a94" stroke-width="1.3" fill="none"/></g>
<!-- Results -->
<g stroke-linejoin="round"><path d="M293 543 L297 540 L301 541.6 V544.6 L305 546 V550.4 L299.4 553.2 L293 550.2 Z" fill="#32b43a"/><path d="M293 543 L297 540 L301 541.6 L297 544.4 Z" fill="#e4341e"/><path d="M293 543 L297 544.4 V547 L293 546 Z" fill="#f0a21e"/><path d="M293 546 L297 547 V549 L293 548.4Z" fill="#f1e02a"/><path d="M299.4 549.6 L305 546.6 V550.4 L299.4 553.2 Z" fill="#2456c8"/><path d="M297 547.6 L299.4 549.6 L305 546 L301 544.6 Z" fill="#3fd04a"/></g>
<!-- Feature Manager -->
<g><rect x="335.6" y="539.2" width="14.6" height="12.8" fill="#e8f1f8" stroke="#1f4f7c" stroke-width="1"/><rect x="335.6" y="539.2" width="14.6" height="3" fill="#2b6ea6"/><g stroke="#2b6ea6" stroke-width="0.9"><line x1="337.4" y1="544.6" x2="348.4" y2="544.6"/><line x1="337.4" y1="546.8" x2="348.4" y2="546.8"/><line x1="337.4" y1="549" x2="348.4" y2="549"/></g><line x1="341" y1="543" x2="341" y2="551" stroke="#e8f1f8" stroke-width="0.7"/></g>
<!-- Global Refresh -->
<g fill="none" stroke-width="2.2"><path d="M391 544.4 A6 6 0 0 1 401.4 542.4" stroke="#4a9ed6"/><path d="M402.4 547.6 A6 6 0 0 1 392 549.6" stroke="#1b5e94"/></g><path d="M403.6 539.6 V544.8 H398.4 Z" fill="#4a9ed6"/><path d="M389.8 552.4 V547.2 H395 Z" fill="#1b5e94"/>
<!-- Finite element (disabled) -->
<g opacity="0.55"><path d="M444.4 539.6 H451.6 V548.4 H444.4 Z" fill="#8db7d6"/><path d="M441 549.4 L444.4 547 H453 L455.8 549.8 L452 552.4 H444 Z" fill="#7aa7c8"/></g>
<!-- Axisymmetry (disabled) -->
<g opacity="0.55"><ellipse cx="491" cy="541.6" rx="5" ry="1.8" fill="#c8c8c8" stroke="#9a9a9a" stroke-width="0.5"/><path d="M486 541.6 V549.6 A5 1.8 0 0 0 496 549.6 V541.6" fill="#d9d9d9" stroke="#9a9a9a" stroke-width="0.5"/><rect x="493.6" y="544" width="3" height="6" fill="#7aa7c8"/><rect x="484.6" y="547.6" width="3" height="3.6" fill="#bdbdbd"/><line x1="491" y1="537.6" x2="491" y2="553.6" stroke="#8a8a8a" stroke-width="0.5" stroke-dasharray="1.5 1"/></g>
<!-- Element type assign (disabled) -->
<g opacity="0.6"><path d="M525.6 540 L529.6 543 M529.6 540 L525.6 543" stroke="#8db7d6" stroke-width="1"/><path d="M527 546 L530.6 549.6 M530.6 546 L527 549.6" stroke="#a8a8a8" stroke-width="0.8"/><rect x="532" y="544.6" width="6.6" height="4.6" rx="1" fill="#8db7d6" stroke="#6a9cc0" stroke-width="0.5"/><path d="M530 541.4 Q534 540.4 535.4 543.6" stroke="#8db7d6" stroke-width="0.8" fill="none"/></g>
<!-- Create analysis case (disabled) -->
<g opacity="0.6"><path d="M568 542 L572 539.4 L576 541 V547 L572 549.4 L568 547.4 Z" fill="#e4e8ec" stroke="#a9b1b8" stroke-width="0.6"/><path d="M573.6 538 V542.6 M572 541 L573.6 542.8 L575.2 541" stroke="#6aa4cf" stroke-width="1" fill="none"/><path d="M575.4 548.4 H581.6 M578.5 545.4 V551.6" stroke="#7ab0d6" stroke-width="2"/></g>
<!-- Material palette -->
<defs><radialGradient id="mp" cx="0.35" cy="0.35" r="0.8"><stop offset="0" stop-color="#d8d8d8"/><stop offset="0.45" stop-color="#6e6e6e"/><stop offset="1" stop-color="#1e1e1e"/></radialGradient></defs>
<ellipse cx="623.4" cy="546" rx="8" ry="6.6" fill="url(#mp)"/><path d="M617.6 544 Q622 541.6 625.6 545.6 Q627.6 548.6 630.4 547.4" stroke="#e8e8e8" stroke-width="1" fill="none" opacity="0.8"/>
<!-- Tabular amplitude (disabled) -->
<g opacity="0.6"><path d="M669.6 538.6 V552 M667.4 549.8 H682" stroke="#a8a8a8" stroke-width="0.8"/><rect x="671.4" y="541" width="10" height="7.4" fill="#eef3f7" stroke="#9a9a9a" stroke-width="0.7"/><rect x="671.4" y="541" width="10" height="2" fill="#8db7d6"/><line x1="676.4" y1="541" x2="676.4" y2="548.4" stroke="#9a9a9a" stroke-width="0.5"/><line x1="671.4" y1="545.6" x2="681.4" y2="545.6" stroke="#9a9a9a" stroke-width="0.5"/></g>
<!-- Simulation properties (disabled) -->
<g opacity="0.6"><circle cx="726" cy="545" r="4.4" fill="none" stroke="#6fc46a" stroke-width="2.2" stroke-dasharray="2.4 1.3"/><circle cx="726" cy="545" r="4.4" fill="none" stroke="#4a9ed6" stroke-width="2.2" stroke-dasharray="2.4 9.2"/><circle cx="726" cy="545" r="1.8" fill="#f6d060"/><rect x="728.6" y="546" width="5.6" height="6.6" fill="#f4f4f4" stroke="#9a9a9a" stroke-width="0.6"/><path d="M729.8 548H733M729.8 549.6H733M729.8 551.2H733" stroke="#9a9a9a" stroke-width="0.5"/></g>
<!-- User subroutine (disabled) -->
<g opacity="0.6"><path d="M766.4 539 H773 L776.4 542.4 V552.6 H766.4 Z" fill="#f6f6f6" stroke="#a8a8a8" stroke-width="0.7"/><path d="M773 539 V542.4 H776.4" fill="none" stroke="#a8a8a8" stroke-width="0.6"/><circle cx="776.4" cy="546.6" r="1.9" fill="#7ab0d6"/><path d="M773 552.8 Q773 548.8 776.4 548.8 Q779.8 548.8 779.8 552.8 Z" fill="#7ab0d6"/></g>
<!-- Automated publication -->
<g><rect x="808.8" y="539.6" width="14.4" height="12.6" fill="#f2f6fa" stroke="#1c3f66" stroke-width="0.9"/><rect x="808.8" y="539.6" width="14.4" height="2.2" fill="#2b6ea6"/><circle cx="816" cy="547.2" r="3.6" fill="#2a7fc4"/><path d="M813.6 545.6 Q815.4 544.4 817 546 Q818 547.6 816.4 549.4" stroke="#10375c" stroke-width="1.1" fill="none"/><rect x="811.6" y="544" width="2.6" height="1.6" fill="#1c3f66"/></g>
<!-- SOLIDWORKS update -->
<g><g fill="none" stroke="#3a8cc8" stroke-width="2"><path d="M880.6 543.6 A5.6 5.6 0 0 1 889.6 540.6"/><path d="M891.4 547.6 A5.6 5.6 0 0 1 882.4 550.6"/></g><path d="M891.6 538 V542.8 H886.8Z" fill="#3a8cc8"/><path d="M880.4 553.2 V548.4 H885.2Z" fill="#3a8cc8"/><rect x="884.6" y="544.6" width="9.6" height="8.2" rx="1.4" fill="#d8261e"/><text x="889.4" y="551" font-size="5.4" font-weight="bold" fill="#fff" text-anchor="middle" font-family="Liberation Sans">S</text><path d="M887.6 546.6 L887.6 554.4 L889.4 552.8 L890.6 555.6 L891.6 555.2 L890.4 552.4 L892.8 552.2 Z" fill="#fff" stroke="#222" stroke-width="0.5"/></g>

</svg>
<svg class="abs" style="left:970px;top:460px" width="54" height="64" viewBox="970 460 54 64"><g fill="none" stroke="#d9d9d9" stroke-width="0.8"><ellipse cx="988" cy="483.6" rx="12" ry="3.6"/><path d="M980.6 480 A8.6 8.6 0 0 1 998.6 484"/><line x1="988.6" y1="470" x2="987.6" y2="482"/><line x1="980.6" y1="479.6" x2="1001" y2="485"/></g><g fill="#bdbdbd"><rect x="988.6" y="465.6" width="1.6" height="1.8"/><rect x="978.6" y="478" width="1.6" height="1.8"/><rect x="1002.6" y="484" width="1.6" height="1.8"/></g><path d="M1014.6 516.6 L1022.4 510 L1018.6 519.6 L1017.6 516.4 Z" fill="#3a3f4a"/></svg>
</body>
</html>
